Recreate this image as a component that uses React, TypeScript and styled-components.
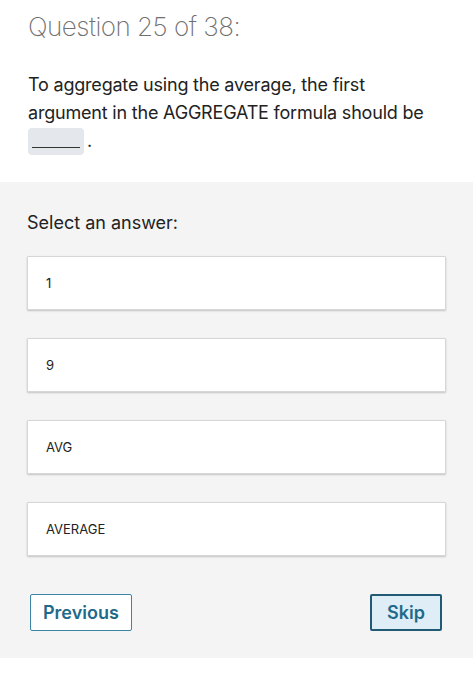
import React from "react";
import styled, { createGlobalStyle } from "styled-components";

const GlobalStyle = createGlobalStyle`
  html, body {
    margin: 0;
    padding: 0;
    background: #ffffff;
  }
  body {
    font-family: Inter, "Liberation Sans", Arial, sans-serif;
    color: #222;
  }
`;

const Page = styled.div`
  width: 473px;
  min-height: 674px;
  background: #fff;
`;

const QuestionSection = styled.section`
  padding: 10px 27px 27px 28px;
  background: #fff;
`;

const Heading = styled.h2`
  margin: 0;
  font-family: Inter, "Liberation Sans", sans-serif;
  font-weight: 200;
  font-size: 26px;
  line-height: 34px;
  color: #707070;
  letter-spacing: -0.5px;
`;

const Prompt = styled.p`
  margin: 27px 0 0;
  font-size: 18px;
  line-height: 28px;
  color: #222;
  letter-spacing: -0.2px;
`;

const Blank = styled.span`
  display: inline-block;
  width: 56px;
  height: 27px;
  vertical-align: top;
  margin: 1px 3px 0 0;
  background: #e4e8ed;
  border-radius: 4px;
  position: relative;
  &::after {
    content: "";
    position: absolute;
    left: 4px;
    right: 4px;
    bottom: 7px;
    height: 1px;
    background: #333;
  }
`;

const AnswerSection = styled.section`
  background: #f4f4f4;
  padding: 30px 27px 27px 27px;
`;

const Label = styled.div`
  font-size: 18px;
  line-height: 22px;
  color: #222;
  margin-bottom: 22px;
`;

const Options = styled.div`
  display: flex;
  flex-direction: column;
  gap: 28px;
`;

const Option = styled.button`
  display: flex;
  align-items: center;
  height: 54px;
  padding: 0 18px;
  background: #fff;
  border: 1px solid #d6d6d6;
  border-radius: 1px;
  box-shadow: 0 1px 2px rgba(0, 0, 0, 0.2);
  font-family: Inter, "Liberation Sans", Arial, sans-serif;
  font-size: 13px;
  color: #222;
  text-align: left;
  cursor: pointer;
`;

const Nav = styled.div`
  display: flex;
  justify-content: space-between;
  align-items: center;
  margin-top: 38px;
  padding: 0 4px 0 3px;
`;

const NavButton = styled.button<{ $primary?: boolean }>`
  height: 37px;
  padding: 0 ${({ $primary }) => ($primary ? "15px" : "12px")};
  border-radius: 2px;
  font-family: Inter, "Liberation Sans", Arial, sans-serif;
  font-size: 18px;
  font-weight: 600;
  color: #1f6a8a;
  cursor: pointer;
  background: ${({ $primary }) => ($primary ? "#dfeef6" : "#ffffff")};
  border: ${({ $primary }) => ($primary ? "2px solid #215a75" : "1px solid #3a85a6")};
`;

const answers = ["1", "9", "AVG", "AVERAGE"];

export default function App() {
  return (
    <Page>
      <GlobalStyle />
      <QuestionSection>
        <Heading>Question 25 of 38:</Heading>
        <Prompt>
          To aggregate using the average, the first argument in the AGGREGATE formula should be{" "}
          <Blank />.
        </Prompt>
      </QuestionSection>
      <AnswerSection>
        <Label>Select an answer:</Label>
        <Options>
          {answers.map((a) => (
            <Option key={a}>{a}</Option>
          ))}
        </Options>
        <Nav>
          <NavButton>Previous</NavButton>
          <NavButton $primary>Skip</NavButton>
        </Nav>
      </AnswerSection>
    </Page>
  );
}
